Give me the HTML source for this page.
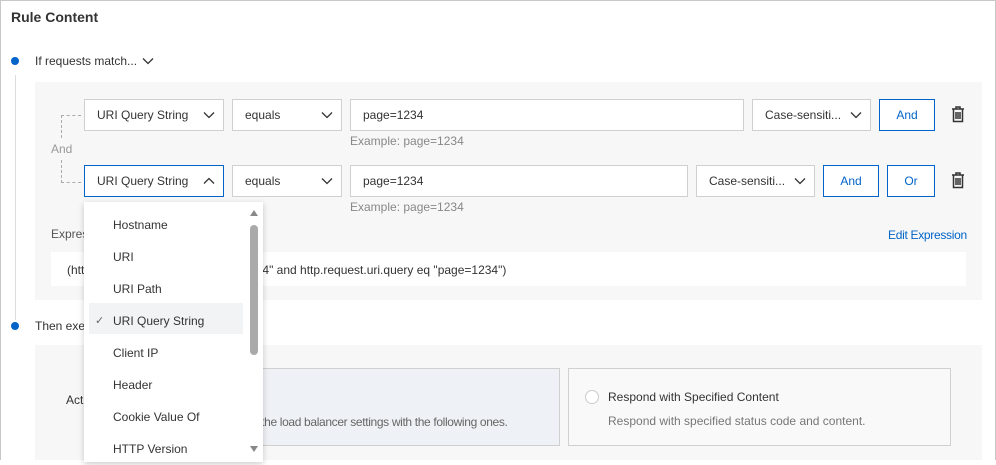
<!DOCTYPE html>
<html><head><style>
*{box-sizing:border-box;margin:0;padding:0}
body{width:996px;height:460px;overflow:hidden;background:#fff;font-family:"Liberation Sans",sans-serif;font-size:12px;color:#333;position:relative}
.a{position:absolute}
.frame{left:0;top:0;width:996px;height:460px;border:1px solid #c8c8c8;border-bottom:none}
.sel{position:absolute;height:32px;border:1px solid #d0d0d0;background:#fff;padding-left:12px;line-height:30px;font-size:12px;color:#333}
.sel svg{position:absolute;right:8px;top:11px}
.btn{position:absolute;height:32px;border:1px solid #0064c8;background:#fff;color:#0064c8;text-align:center;line-height:30px;font-size:12px}
.ex{position:absolute;color:#888;font-size:12px}
.dot{position:absolute;width:8px;height:8px;border-radius:50%;background:#0064c8}
.item{position:absolute;left:0;width:160px;height:31px;line-height:31px;padding-left:29px;font-size:12px;color:#333}
</style></head><body>
<div class="a frame"></div>
<div class="a" style="left:11px;top:9px;font-size:14px;font-weight:bold;color:#333">Rule Content</div>
<div class="dot" style="left:11px;top:57px"></div>
<div class="a" style="left:35px;top:54px;font-size:12px;color:#333">If requests match... <svg width="12" height="8" viewBox="0 0 12 8" style="margin-left:2px"><path d="M1 1.5l5 5 5-5" fill="none" stroke="#333" stroke-width="1.3"/></svg></div>
<div class="a" style="left:15px;top:75px;width:1px;height:245px;background:#ddd"></div>
<div class="a" style="left:35px;top:82px;width:947px;height:218px;background:#f7f7f7"></div>
<div class="a" style="left:61px;top:115px;width:1px;height:68px;border-left:1px dashed #aaa"></div>
<div class="a" style="left:61px;top:115px;width:20px;border-top:1px dashed #aaa"></div>
<div class="a" style="left:61px;top:182px;width:20px;border-top:1px dashed #aaa"></div>
<div class="a" style="left:50px;top:140px;background:#f7f7f7;color:#999;font-size:12px;padding:2px 1px">And</div>

<div class="sel" style="left:84px;top:99px;width:140px">URI Query String<svg width="12" height="8"><path d="M1 1.5l5 5 5-5" fill="none" stroke="#333" stroke-width="1.3"/></svg></div>
<div class="sel" style="left:232px;top:99px;width:110px">equals<svg width="12" height="8"><path d="M1 1.5l5 5 5-5" fill="none" stroke="#333" stroke-width="1.3"/></svg></div>
<div class="sel" style="left:350px;top:99px;width:394px">page=1234</div>
<div class="sel" style="left:752px;top:99px;width:119px">Case-sensiti...<svg width="12" height="8"><path d="M1 1.5l5 5 5-5" fill="none" stroke="#333" stroke-width="1.3"/></svg></div>
<div class="btn" style="left:879px;top:99px;width:56px">And</div>
<svg class="a" style="left:951px;top:106px" width="14" height="17" viewBox="0 0 14 17"><path d="M1 3h12M5 3V1h4v2M2.5 3.5v12h9v-12M5 6v7M7 6v7M9 6v7" fill="none" stroke="#333" stroke-width="1.5"/></svg>
<div class="ex" style="left:350px;top:134px">Example: page=1234</div>

<div class="sel" style="left:84px;top:165px;width:140px;border-color:#0064c8">URI Query String<svg width="12" height="8"><path d="M1 6.5l5-5 5 5" fill="none" stroke="#333" stroke-width="1.3"/></svg></div>
<div class="sel" style="left:232px;top:165px;width:110px">equals<svg width="12" height="8"><path d="M1 1.5l5 5 5-5" fill="none" stroke="#333" stroke-width="1.3"/></svg></div>
<div class="sel" style="left:350px;top:165px;width:338px">page=1234</div>
<div class="sel" style="left:696px;top:165px;width:119px">Case-sensiti...<svg width="12" height="8"><path d="M1 1.5l5 5 5-5" fill="none" stroke="#333" stroke-width="1.3"/></svg></div>
<div class="btn" style="left:823px;top:165px;width:56px">And</div>
<div class="btn" style="left:887px;top:165px;width:48px">Or</div>
<svg class="a" style="left:951px;top:172px" width="14" height="17" viewBox="0 0 14 17"><path d="M1 3h12M5 3V1h4v2M2.5 3.5v12h9v-12M5 6v7M7 6v7M9 6v7" fill="none" stroke="#333" stroke-width="1.5"/></svg>
<div class="ex" style="left:350px;top:200px">Example: page=1234</div>

<div class="a" style="left:51px;top:227px;color:#555">Expression</div>
<div class="a" style="left:888px;top:228px;color:#0064c8;font-size:12px;letter-spacing:-0.3px">Edit Expression</div>
<div class="a" style="left:51px;top:252px;width:915px;height:34px;background:#fff"></div>
<div class="a" style="left:67px;top:263px;color:#333;font-size:12px">(http.request.uri.query eq "page=1234" and http.request.uri.query eq "page=1234")</div>

<div class="dot" style="left:11px;top:322px"></div>
<div class="a" style="left:35px;top:319px;font-size:12px">Then execute</div>
<div class="a" style="left:35px;top:345px;width:947px;height:115px;background:#f7f7f7"></div>
<div class="a" style="left:66px;top:393px;font-size:12px">Action</div>
<div class="a" style="left:228px;top:368px;width:332px;height:78px;background:#eef1f5;border:1px solid #d0d0d0"></div>
<div class="a" style="left:210px;top:415px;color:#666;font-size:12px;letter-spacing:-0.35px">Overwrite the load balancer settings with the following ones.</div>
<div class="a" style="left:568px;top:368px;width:383px;height:78px;background:#f9f9f9;border:1px solid #d0d0d0"></div>
<div class="a" style="left:585px;top:390px;width:14px;height:14px;border:1px solid #ccc;border-radius:50%;background:#fff"></div>
<div class="a" style="left:608px;top:390px;font-size:12px">Respond with Specified Content</div>
<div class="a" style="left:608px;top:414px;color:#777;font-size:12px">Respond with specified status code and content.</div>

<div class="a" style="left:84px;top:202px;width:179px;height:260px;background:#fff;box-shadow:0 2px 6px rgba(0,0,0,.2)">
<div class="a" style="left:5px;top:101px;width:154px;height:31px;background:#f2f3f5"></div>
<div class="item" style="top:8px">Hostname</div>
<div class="item" style="top:40px">URI</div>
<div class="item" style="top:72px">URI Path</div>
<div class="item" style="top:104px">URI Query String</div>
<div class="a" style="left:11px;top:112px;color:#666;font-size:11px">✓</div>
<div class="item" style="top:136px">Client IP</div>
<div class="item" style="top:168px">Header</div>
<div class="item" style="top:200px">Cookie Value Of</div>
<div class="item" style="top:232px">HTTP Version</div>
<svg class="a" style="left:165px;top:7px" width="10" height="8"><path d="M1 7l4-6 4 6z" fill="#888"/></svg>
<div class="a" style="left:166px;top:23px;width:8px;height:130px;border-radius:4px;background:#aaa"></div>
<svg class="a" style="left:165px;top:243px" width="10" height="8"><path d="M1 1l4 6 4-6z" fill="#888"/></svg>
</div>
</body></html>
